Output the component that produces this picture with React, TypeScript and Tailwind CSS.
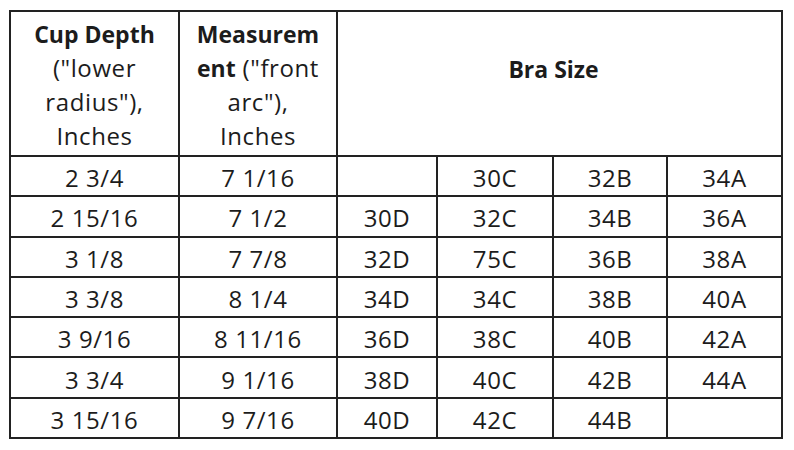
const rows: string[][] = [
  ['2 3/4', '7 1/16', '', '30C', '32B', '34A'],
  ['2 15/16', '7 1/2', '30D', '32C', '34B', '36A'],
  ['3 1/8', '7 7/8', '32D', '75C', '36B', '38A'],
  ['3 3/8', '8 1/4', '34D', '34C', '38B', '40A'],
  ['3 9/16', '8 11/16', '36D', '38C', '40B', '42A'],
  ['3 3/4', '9 1/16', '38D', '40C', '42B', '44A'],
  ['3 15/16', '9 7/16', '40D', '42C', '44B', ''],
];

const widths = ['w-[169px]', 'w-[158px]', 'w-[100px]', 'w-[116px]', 'w-[114px]', 'w-[115px]'];

export default function App() {
  return (
    <div
      className="w-[794px] h-[450px] bg-white text-[#1c1c1c] pt-[10px] pl-[9px]"
      style={{ fontFamily: '"Open Sans", "Noto Sans", sans-serif' }}
    >
      <table className="table-fixed border-collapse w-[774px] text-[24px] tracking-[0.6px]">
        <colgroup>
          {widths.map((w, i) => (
            <col key={i} className={w} />
          ))}
        </colgroup>
        <thead>
          <tr className="h-[145px]">
            <th className="border-2 border-[#222] font-normal leading-[34px] align-middle pt-[3px]">
              <span className="font-bold text-[23px] tracking-normal">Cup Depth</span>
              <br />
              ("lower
              <br />
              radius"),
              <br />
              Inches
            </th>
            <th className="border-2 border-[#222] font-normal leading-[34px] align-middle pt-[3px]">
              <span className="font-bold text-[23px] tracking-normal">Measurem</span>
              <br />
              <span className="font-bold text-[23px] tracking-normal">ent</span> ("front
              <br />
              arc"),
              <br />
              Inches
            </th>
            <th
              colSpan={4}
              className="border-2 border-[#222] font-bold text-[23px] tracking-normal leading-[34px] align-top pt-[40px] pr-3"
            >
              Bra Size
            </th>
          </tr>
        </thead>
        <tbody>
          {rows.map((r, i) => (
            <tr key={i} className="h-[40.3px]">
              {r.map((c, j) => (
                <td
                  key={j}
                  className="border-2 border-[#222] text-center leading-[30px] pt-[4px] pb-0"
                >
                  {c}
                </td>
              ))}
            </tr>
          ))}
        </tbody>
      </table>
    </div>
  );
}
